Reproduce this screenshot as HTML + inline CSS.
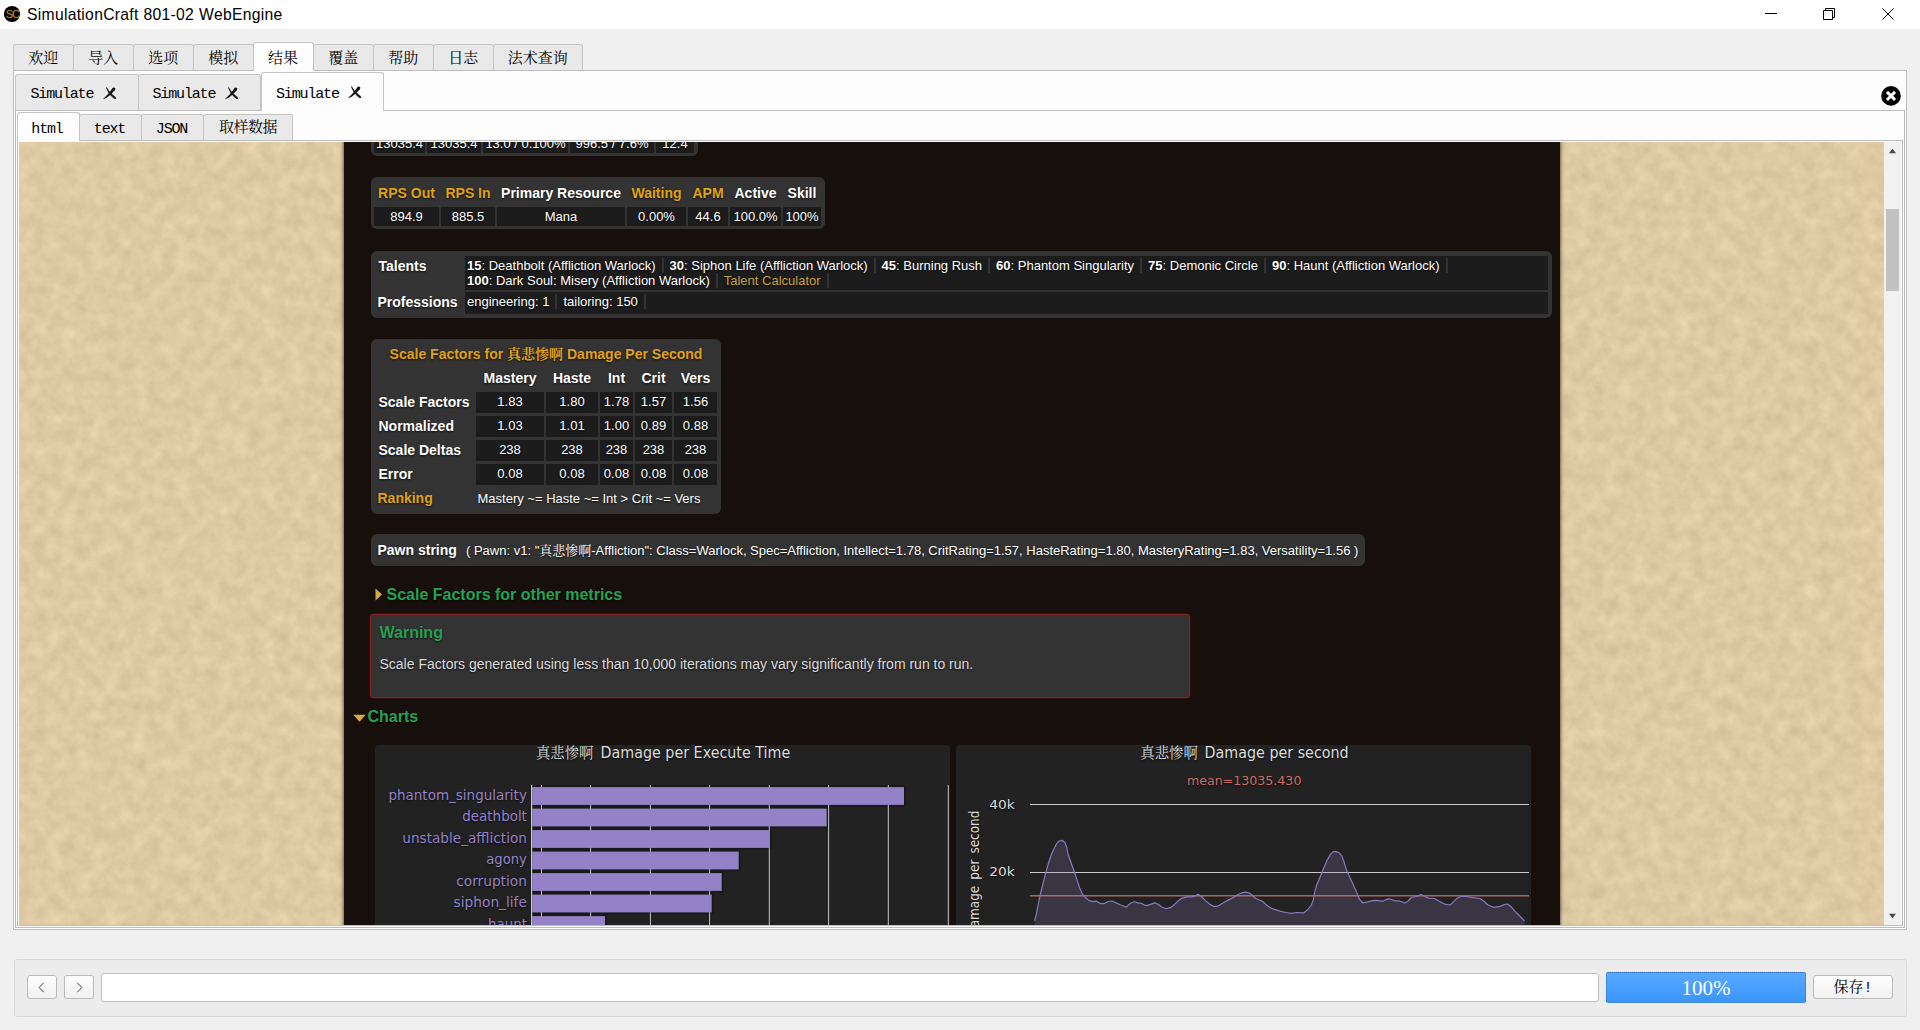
<!DOCTYPE html>
<html lang="zh">
<head>
<meta charset="utf-8">
<title>SimulationCraft 801-02 WebEngine</title>
<style>
*{margin:0;padding:0;border:none;box-sizing:content-box}
html,body{width:1920px;height:1030px;overflow:hidden;background:#f0f0f0}
body{position:relative;font-family:"Liberation Sans",sans-serif}
.abs{position:absolute}
/* ---------- window chrome ---------- */
#titlebar{position:absolute;left:0;top:0;width:1920px;height:29px;background:#fff}
#title{position:absolute;left:27px;top:5.3px;font:15.7px/20px "Liberation Sans",sans-serif;color:#000;white-space:nowrap;letter-spacing:0.29px;word-spacing:.3px}
.qt{font-family:"Liberation Mono","Noto Serif CJK SC",serif;color:#000;white-space:nowrap}
.tab{position:absolute;background:#e9e9e9;border:1px solid #c4c4c4;border-bottom:none;border-radius:3px 3px 0 0;text-align:center;box-sizing:border-box}
.tab.sel{background:#fdfdfd}
.pane{position:absolute;border:1px solid #bcbcbc;background:#fdfdfd;box-sizing:border-box}

.t1{top:44px;width:61px;height:26px;font-size:15px;line-height:30px;text-indent:-0.5px}
.t2{top:74px;width:123px;height:36px;font-size:15px;line-height:40px;letter-spacing:-1.15px;text-align:left;padding-left:13.5px}
.t2 svg{position:absolute;left:85.5px;top:11.5px}.t2.sel svg{top:13px;left:86px}.t2.first svg{left:86.5px}
.t3{top:114px;width:63px;height:26px;font-size:15px;line-height:30px;letter-spacing:-1.15px;text-indent:-2px}
.btn{position:absolute;box-sizing:border-box;border:1px solid #b9b9b9;border-radius:3px;background:linear-gradient(#fefefe,#f1f1f1)}
#prog{border:1px dotted #2f6fc0;border-radius:2px;background:linear-gradient(#58a8ff,#3a96fd);color:#fff;text-align:center;font-size:21px;line-height:31px;font-family:"Liberation Serif","Noto Serif CJK SC",serif}
/* ---------- web view ---------- */
#web .in{position:absolute;left:-19px;top:-142px;width:1920px;height:1030px;font-size:13px;color:#fff;font-family:"Liberation Sans","Noto Serif CJK SC",sans-serif;text-shadow:0 1px 2px rgba(0,0,0,.75)}
#sec{position:absolute;left:344px;top:100px;width:1216px;height:900px;background:#160f0b;box-shadow:0 0 4px rgba(0,0,0,.8)}
.box{position:absolute;background:#333;border-radius:6px}
.c{position:absolute;background:#1c1c1c;text-align:center;font-size:13px;line-height:19px;height:19px;white-space:nowrap;color:#fff}
.h{position:absolute;text-align:center;font-weight:bold;font-size:14px;line-height:19px;white-space:nowrap;color:#fff}
.g{color:#e0a215}
.l{text-align:left}
h3{position:absolute;font:bold 16px/20px "Liberation Sans",sans-serif;color:#27a052;white-space:nowrap}
ul.fl{list-style:none;position:absolute}
ul.fl li{float:left;padding-right:6px;margin-right:6px;border-right:2px solid #333;line-height:15px;height:15px;white-space:nowrap}
ul.fl a{color:#c7a23c}

#web{position:absolute;left:19px;top:142px;width:1865px;height:783px;overflow:hidden;background:#dcc9a1}
#sb{position:absolute;left:1884px;top:142px;width:17px;height:783px;background:#f1f1f1}
</style>
</head>
<body>
<div id="titlebar">
  <svg class="abs" style="left:3px;top:4.8px" width="18" height="18" viewBox="0 0 18 18"><circle cx="9" cy="9" r="8.1" fill="#050403"/><text x="9.2" y="12.9" font-family="Liberation Sans, sans-serif" font-size="11" letter-spacing="-1.2" fill="#c8921e" text-anchor="middle">SC</text></svg>
  <div id="title">SimulationCraft 801-02 WebEngine</div>
  <svg class="abs" style="left:1760px;top:4px" width="150" height="22" viewBox="0 0 150 22" fill="none" stroke="#000" stroke-width="1">
    <path d="M5 9.5H17"/>
    <path d="M63.5 6.5h9v9h-9zM65.5 6.5v-2h9v9h-2"/>
    <path d="M122.5 4.5l11 11M133.5 4.5l-11 11"/>
  </svg>
</div>

<!-- main tab pane -->
<div class="pane" style="left:13px;top:70px;width:1894px;height:860px"></div>

<!-- top-level tabs -->
<div id="toptabs">
  <div class="tab qt t1" style="left:13px">欢迎</div>
  <div class="tab qt t1" style="left:73px">导入</div>
  <div class="tab qt t1" style="left:133px">选项</div>
  <div class="tab qt t1" style="left:193px">模拟</div>
  <div class="tab qt t1" style="left:313px">覆盖</div>
  <div class="tab qt t1" style="left:373px">帮助</div>
  <div class="tab qt t1" style="left:433px">日志</div>
  <div class="tab qt t1" style="left:493px;width:90px">法术查询</div>
  <div class="tab qt t1 sel" style="left:253px;top:42px;width:61px;height:29px;line-height:33px;text-indent:-1px">结果</div>
</div>
<!-- second-level pane + tabs -->
<div class="pane" style="left:15px;top:110px;width:1890px;height:818px"></div>
<div class="tab qt t2 first" style="left:15px;width:124px;padding-left:14.5px">Simulate<svg width="14.5" height="13.5" viewBox="0 0 14 13"><path d="M9.6 .4L11.9 1 11.6 2.8 7.5 7.2 3.5 10.3 .2 11.9 .5 11.2 4 7.8 6.5 4.8Z" fill="#111"/><path d="M3 .2L3.8 .4 6.5 4.5 9.5 7.5 12.3 9.8 12.8 11.5 11 11.6 8 9 5.2 5.5 3.2 1.5Z" fill="#1a1a1a"/></svg></div>
<div class="tab qt t2" style="left:138px">Simulate<svg width="14.5" height="13.5" viewBox="0 0 14 13"><path d="M9.6 .4L11.9 1 11.6 2.8 7.5 7.2 3.5 10.3 .2 11.9 .5 11.2 4 7.8 6.5 4.8Z" fill="#111"/><path d="M3 .2L3.8 .4 6.5 4.5 9.5 7.5 12.3 9.8 12.8 11.5 11 11.6 8 9 5.2 5.5 3.2 1.5Z" fill="#1a1a1a"/></svg></div>
<div class="tab qt t2 sel" style="left:261px;top:72px;height:39px;line-height:43px;padding-left:14px">Simulate<svg width="14.5" height="13.5" viewBox="0 0 14 13"><path d="M9.6 .4L11.9 1 11.6 2.8 7.5 7.2 3.5 10.3 .2 11.9 .5 11.2 4 7.8 6.5 4.8Z" fill="#111"/><path d="M3 .2L3.8 .4 6.5 4.5 9.5 7.5 12.3 9.8 12.8 11.5 11 11.6 8 9 5.2 5.5 3.2 1.5Z" fill="#1a1a1a"/></svg></div>
<svg class="abs" style="left:1880px;top:85px" width="22" height="22" viewBox="0 0 22 22"><circle cx="11" cy="10.9" r="9.8" fill="#000"/><path d="M8 7.9l6 6M14 7.9l-6 6" stroke="#fff" stroke-width="2.9" stroke-linecap="square"/></svg>
<!-- third-level pane + tabs -->
<div class="pane" style="left:17px;top:140px;width:1886px;height:786px"></div>
<div class="tab qt t3 sel" style="left:17px;top:112px;width:63px;height:29px;line-height:33.5px;text-indent:-3px">html</div>
<div class="tab qt t3" style="left:79px">text</div>
<div class="tab qt t3" style="left:141px">JSON</div>
<div class="tab qt t3" style="left:203px;width:90px;letter-spacing:-0.5px;text-indent:0;line-height:27px">取样数据</div>

<div id="web">
<svg class="abs" style="left:0;top:0" width="1865" height="783"><filter id="pf" x="0" y="0" width="100%" height="100%" color-interpolation-filters="sRGB"><feTurbulence type="fractalNoise" baseFrequency="0.07" numOctaves="4" seed="7"/><feColorMatrix type="matrix" values="0.12 0 0 0 0.81  0.12 0 0 0 0.735  0.11 0 0 0 0.585  0 0 0 0 1"/></filter><rect width="1865" height="783" filter="url(#pf)"/></svg>
<div class="in">
<div id="sec"></div>
<div class="box" style="left:371px;top:110px;width:327px;height:46.4px"></div>
<div class="c" style="left:374px;top:134px;width:51px;">13035.4</div>
<div class="c" style="left:427px;top:134px;width:54px;">13035.4</div>
<div class="c" style="left:483px;top:134px;width:85px;">13.0 / 0.100%</div>
<div class="c" style="left:570px;top:134px;width:84px;">996.5 / 7.6%</div>
<div class="c" style="left:656px;top:134px;width:38px;">12.4</div>
<div class="box" style="left:371px;top:177.4px;width:454px;height:52px"></div>
<div class="h" style="left:374px;top:184px;width:65px;"><span class="g">RPS Out</span></div>
<div class="h" style="left:441px;top:184px;width:54px;"><span class="g">RPS In</span></div>
<div class="h" style="left:497px;top:184px;width:128px;">Primary Resource</div>
<div class="h" style="left:627px;top:184px;width:59px;"><span class="g">Waiting</span></div>
<div class="h" style="left:688px;top:184px;width:40px;"><span class="g">APM</span></div>
<div class="h" style="left:730px;top:184px;width:51px;">Active</div>
<div class="h" style="left:783px;top:184px;width:38px;">Skill</div>
<div class="c" style="left:374px;top:207px;width:65px;">894.9</div>
<div class="c" style="left:441px;top:207px;width:54px;">885.5</div>
<div class="c" style="left:497px;top:207px;width:128px;">Mana</div>
<div class="c" style="left:627px;top:207px;width:59px;">0.00%</div>
<div class="c" style="left:688px;top:207px;width:40px;">44.6</div>
<div class="c" style="left:730px;top:207px;width:51px;">100.0%</div>
<div class="c" style="left:783px;top:207px;width:38px;">100%</div>
<div class="box" style="left:371px;top:250.6px;width:1181px;height:67.4px"></div>
<div class="c" style="left:465px;top:256px;width:1083px;height:34px"></div>
<div class="c" style="left:465px;top:292px;width:1083px;height:22px"></div>
<div class="h l" style="left:378.5px;top:257px">Talents</div>
<div class="h l" style="left:377.5px;top:292.5px">Professions</div>
<ul class="fl" style="left:467px;top:258px;width:1080px"><li><b>15</b>: Deathbolt (Affliction Warlock)</li><li><b>30</b>: Siphon Life (Affliction Warlock)</li><li><b>45</b>: Burning Rush</li><li><b>60</b>: Phantom Singularity</li><li><b>75</b>: Demonic Circle</li><li><b>90</b>: Haunt (Affliction Warlock)</li><li><b>100</b>: Dark Soul: Misery (Affliction Warlock)</li><li><a>Talent Calculator</a></li></ul>
<ul class="fl" style="left:467px;top:294px;width:1080px"><li>engineering: 1</li><li>tailoring: 150</li></ul>
<div class="box" style="left:371px;top:338.6px;width:350px;height:175.4px"></div>
<div class="h g" style="left:371px;top:344.5px;width:350px">Scale Factors for 真悲惨啊 Damage Per Second</div>
<div class="h" style="left:476px;top:368.5px;width:68px;">Mastery</div>
<div class="h" style="left:546px;top:368.5px;width:52px;">Haste</div>
<div class="h" style="left:600px;top:368.5px;width:33px;">Int</div>
<div class="h" style="left:635px;top:368.5px;width:37px;">Crit</div>
<div class="h" style="left:674px;top:368.5px;width:43px;">Vers</div>
<div class="h l" style="left:378.5px;top:392.0px;line-height:21px">Scale Factors</div>
<div class="c" style="left:476px;top:392.0px;width:68px;height:21px;line-height:19px;">1.83</div>
<div class="c" style="left:546px;top:392.0px;width:52px;height:21px;line-height:19px;">1.80</div>
<div class="c" style="left:600px;top:392.0px;width:33px;height:21px;line-height:19px;">1.78</div>
<div class="c" style="left:635px;top:392.0px;width:37px;height:21px;line-height:19px;">1.57</div>
<div class="c" style="left:674px;top:392.0px;width:43px;height:21px;line-height:19px;">1.56</div>
<div class="h l" style="left:378.5px;top:416.0px;line-height:21px">Normalized</div>
<div class="c" style="left:476px;top:416.0px;width:68px;height:21px;line-height:19px;">1.03</div>
<div class="c" style="left:546px;top:416.0px;width:52px;height:21px;line-height:19px;">1.01</div>
<div class="c" style="left:600px;top:416.0px;width:33px;height:21px;line-height:19px;">1.00</div>
<div class="c" style="left:635px;top:416.0px;width:37px;height:21px;line-height:19px;">0.89</div>
<div class="c" style="left:674px;top:416.0px;width:43px;height:21px;line-height:19px;">0.88</div>
<div class="h l" style="left:378.5px;top:440.0px;line-height:21px">Scale Deltas</div>
<div class="c" style="left:476px;top:440.0px;width:68px;height:21px;line-height:19px;">238</div>
<div class="c" style="left:546px;top:440.0px;width:52px;height:21px;line-height:19px;">238</div>
<div class="c" style="left:600px;top:440.0px;width:33px;height:21px;line-height:19px;">238</div>
<div class="c" style="left:635px;top:440.0px;width:37px;height:21px;line-height:19px;">238</div>
<div class="c" style="left:674px;top:440.0px;width:43px;height:21px;line-height:19px;">238</div>
<div class="h l" style="left:378.5px;top:464.0px;line-height:21px">Error</div>
<div class="c" style="left:476px;top:464.0px;width:68px;height:21px;line-height:19px;">0.08</div>
<div class="c" style="left:546px;top:464.0px;width:52px;height:21px;line-height:19px;">0.08</div>
<div class="c" style="left:600px;top:464.0px;width:33px;height:21px;line-height:19px;">0.08</div>
<div class="c" style="left:635px;top:464.0px;width:37px;height:21px;line-height:19px;">0.08</div>
<div class="c" style="left:674px;top:464.0px;width:43px;height:21px;line-height:19px;">0.08</div>
<div class="h l g" style="left:377.5px;top:488px;line-height:21px">Ranking</div>
<div class="h l" style="left:477.5px;top:488px;line-height:21px;font-weight:normal;font-size:13px">Mastery ~= Haste ~= Int &gt; Crit ~= Vers</div>
<div class="box" style="left:371px;top:534px;width:994px;height:32px"></div>
<div class="h l" style="left:377.5px;top:541px">Pawn string</div>
<div class="h l" style="left:466px;top:541px;font-weight:normal;font-size:13px">( Pawn: v1: "真悲惨啊-Affliction": Class=Warlock, Spec=Affliction, Intellect=1.78, CritRating=1.57, HasteRating=1.80, MasteryRating=1.83, Versatility=1.56 )</div>
<svg class="abs" style="left:375px;top:588px" width="8" height="14"><path d="M0.5 0.5v12l6.5-6z" fill="#d7a940"/></svg>
<h3 style="left:386.5px;top:585px">Scale Factors for other metrics</h3>
<div class="abs" style="left:370px;top:614px;width:820px;height:84px;box-sizing:border-box;border:1px solid #8a2424;border-radius:4px;background:#333;box-shadow:0 0 2px #a11d1d"></div>
<h3 style="left:379.5px;top:622.5px">Warning</h3>
<div class="abs" style="left:379.5px;top:655px;font-size:14px;line-height:18px;color:#dcdcdc;white-space:nowrap">Scale Factors generated using less than 10,000 iterations may vary significantly from run to run.</div>
<svg class="abs" style="left:353px;top:714px" width="14" height="9"><path d="M0.3 0.8h12.4l-6.2 7z" fill="#d7a940"/></svg>
<h3 style="left:367.5px;top:707px">Charts</h3>
<svg class="abs" style="left:0;top:0;overflow:visible" width="1920" height="1030" font-family="DejaVu Sans, Noto Serif CJK SC, sans-serif">
<rect x="375" y="745" width="575" height="220" rx="4" fill="#222"/>
<rect x="956" y="745" width="575" height="220" rx="4" fill="#222"/>
<text y="758" font-size="15" fill="#dcdcdc"><tspan x="536" font-family="Liberation Serif, Noto Serif CJK SC, serif" font-size="14.5" textLength="57.5" lengthAdjust="spacingAndGlyphs">真悲惨啊</tspan><tspan x="600.6" textLength="189.6" lengthAdjust="spacingAndGlyphs">Damage per Execute Time</tspan></text>
<rect x="530" y="785.1" width="376.0" height="21.8" fill="#191919"/>
<rect x="530" y="806.6" width="298.7" height="21.8" fill="#191919"/>
<rect x="530" y="828.1" width="242.0" height="21.8" fill="#191919"/>
<rect x="530" y="849.6" width="210.7" height="21.8" fill="#191919"/>
<rect x="530" y="871.1" width="193.7" height="21.8" fill="#191919"/>
<rect x="530" y="892.6" width="183.7" height="21.8" fill="#191919"/>
<rect x="530" y="914.1" width="77.0" height="21.8" fill="#191919"/>
<rect x="541.0" y="785" width="1" height="200" fill="#c4c4c4"/>
<rect x="590.1" y="785" width="1" height="200" fill="#c4c4c4"/>
<rect x="649.9" y="785" width="1" height="200" fill="#c4c4c4"/>
<rect x="709.1" y="785" width="1" height="200" fill="#c4c4c4"/>
<rect x="768.8" y="785" width="1" height="200" fill="#c4c4c4"/>
<rect x="828.1" y="785" width="1" height="200" fill="#c4c4c4"/>
<rect x="887.8" y="785" width="1" height="200" fill="#c4c4c4"/>
<rect x="947.8" y="785" width="1" height="200" fill="#c4c4c4"/>
<rect x="531" y="785" width="1.2" height="200" fill="#d0d0d0"/>
<rect x="532.2" y="787.1" width="371.8" height="17.8" fill="#9482c9"/>
<rect x="532.2" y="808.6" width="294.5" height="17.8" fill="#9482c9"/>
<rect x="532.2" y="830.1" width="237.8" height="17.8" fill="#9482c9"/>
<rect x="532.2" y="851.6" width="206.5" height="17.8" fill="#9482c9"/>
<rect x="532.2" y="873.1" width="189.5" height="17.8" fill="#9482c9"/>
<rect x="532.2" y="894.6" width="179.5" height="17.8" fill="#9482c9"/>
<rect x="532.2" y="916.1" width="72.8" height="17.8" fill="#9482c9"/>
<text x="388.4" y="799.8" font-size="13.5" fill="#9482c9" textLength="138.5" lengthAdjust="spacingAndGlyphs">phantom_singularity</text>
<text x="462.3" y="821.3" font-size="13.5" fill="#9482c9" textLength="64.6" lengthAdjust="spacingAndGlyphs">deathbolt</text>
<text x="402.3" y="842.8" font-size="13.5" fill="#9482c9" textLength="124.6" lengthAdjust="spacingAndGlyphs">unstable_affliction</text>
<text x="486.2" y="864.3" font-size="13.5" fill="#9482c9" textLength="40.7" lengthAdjust="spacingAndGlyphs">agony</text>
<text x="456.2" y="885.8" font-size="13.5" fill="#9482c9" textLength="70.7" lengthAdjust="spacingAndGlyphs">corruption</text>
<text x="453.6" y="907.3" font-size="13.5" fill="#9482c9" textLength="73.3" lengthAdjust="spacingAndGlyphs">siphon_life</text>
<text x="488" y="928.8" font-size="13.5" fill="#9482c9" textLength="38.9" lengthAdjust="spacingAndGlyphs">haunt</text>
<text y="757.8" font-size="15" fill="#dcdcdc"><tspan x="1140.3" font-family="Liberation Serif, Noto Serif CJK SC, serif" font-size="14.5" textLength="57.5" lengthAdjust="spacingAndGlyphs">真悲惨啊</tspan><tspan x="1204.6" textLength="144" lengthAdjust="spacingAndGlyphs">Damage per second</tspan></text>
<text x="1187" y="784.7" font-size="12" fill="#cf6d63" textLength="114.4" lengthAdjust="spacingAndGlyphs">mean=13035.430</text>
<text x="989.3" y="809.1" font-size="13" fill="#dcdcdc" textLength="25.5" lengthAdjust="spacingAndGlyphs">40k</text>
<text x="989.3" y="876.1" font-size="13" fill="#dcdcdc" textLength="25.5" lengthAdjust="spacingAndGlyphs">20k</text>
<text transform="translate(978.7,810.6) rotate(-90)" x="0" y="0" text-anchor="end" font-size="14" fill="#dcdcdc" textLength="126" word-spacing="2.6" lengthAdjust="spacingAndGlyphs">Damage per second</text>
<rect x="1030" y="804" width="499" height="1" fill="#c8c8c8"/>
<rect x="1030" y="872" width="499" height="1" fill="#c8c8c8"/>
<path d="M1034.6 940 L1034.6 920.9 L1036.2 914.8 L1038.3 904.0 L1040.3 894.5 L1043.0 883.6 L1045.7 872.8 L1048.4 863.3 L1051.1 855.2 L1053.9 849.1 L1056.6 843.7 L1059.3 841.0 L1062.0 840.3 L1064.7 842.3 L1066.7 847.1 L1068.1 854.5 L1070.8 862.0 L1074.2 871.5 L1076.9 879.6 L1079.6 887.7 L1082.3 893.8 L1085.0 897.2 L1089.1 900.6 L1093.1 901.7 L1096.5 901.2 L1100.6 903.7 L1104.0 903.7 L1108.0 901.5 L1112.1 901.0 L1116.1 902.9 L1120.2 904.8 L1123.6 906.0 L1126.3 907.1 L1130.4 903.3 L1134.4 901.7 L1137.8 902.9 L1141.2 903.3 L1145.3 905.6 L1150.0 904.6 L1154.7 902.9 L1158.1 904.2 L1162.2 907.3 L1166.2 908.7 L1170.3 907.7 L1173.7 905.3 L1177.8 901.2 L1181.8 898.3 L1186.6 896.9 L1192.0 896.9 L1196.0 895.6 L1198.1 894.2 L1201.4 896.5 L1205.5 900.6 L1209.6 904.0 L1213.6 906.4 L1217.0 906.4 L1221.8 903.7 L1227.2 900.6 L1232.6 897.9 L1238.0 894.5 L1242.1 892.7 L1246.1 892.2 L1250.2 893.4 L1255.6 898.5 L1262.4 901.2 L1267.8 906.0 L1271.9 908.7 L1275.4 909.6 L1280.8 911.4 L1286.2 912.5 L1291.7 913.4 L1297.1 912.5 L1303.9 912.8 L1307.9 909.4 L1311.3 905.3 L1313.3 899.9 L1314.7 891.8 L1316.7 885.0 L1320.1 876.9 L1323.5 868.7 L1326.9 860.6 L1330.3 854.5 L1333.0 851.8 L1335.7 851.4 L1339.1 852.8 L1341.8 855.9 L1343.8 861.3 L1346.5 870.1 L1349.9 877.5 L1353.3 885.0 L1356.7 892.4 L1359.4 899.2 L1362.8 903.0 L1367.5 901.9 L1374.3 900.3 L1378.3 900.6 L1382.4 901.2 L1387.8 898.9 L1390.5 899.2 L1394.6 900.6 L1400.0 901.2 L1404.7 902.9 L1408.1 901.0 L1411.5 897.5 L1416.2 896.5 L1421.0 894.5 L1424.4 896.1 L1428.4 898.1 L1434.5 898.5 L1439.3 901.2 L1444.7 904.2 L1450.1 905.0 L1453.5 901.9 L1456.9 898.3 L1460.9 896.5 L1466.3 896.5 L1473.1 897.6 L1479.9 898.5 L1484.0 901.2 L1488.0 905.0 L1493.4 907.3 L1498.8 906.7 L1504.3 904.6 L1507.6 904.0 L1511.0 906.7 L1516.4 912.8 L1521.9 918.2 L1524.6 920.9 L1524.6 940Z" fill="#9482c9" fill-opacity="0.2"/>
<rect x="1030" y="895.2" width="499" height="1.2" fill="#c97b72"/>
<path d="M1034.6 920.9 L1036.2 914.8 L1038.3 904.0 L1040.3 894.5 L1043.0 883.6 L1045.7 872.8 L1048.4 863.3 L1051.1 855.2 L1053.9 849.1 L1056.6 843.7 L1059.3 841.0 L1062.0 840.3 L1064.7 842.3 L1066.7 847.1 L1068.1 854.5 L1070.8 862.0 L1074.2 871.5 L1076.9 879.6 L1079.6 887.7 L1082.3 893.8 L1085.0 897.2 L1089.1 900.6 L1093.1 901.7 L1096.5 901.2 L1100.6 903.7 L1104.0 903.7 L1108.0 901.5 L1112.1 901.0 L1116.1 902.9 L1120.2 904.8 L1123.6 906.0 L1126.3 907.1 L1130.4 903.3 L1134.4 901.7 L1137.8 902.9 L1141.2 903.3 L1145.3 905.6 L1150.0 904.6 L1154.7 902.9 L1158.1 904.2 L1162.2 907.3 L1166.2 908.7 L1170.3 907.7 L1173.7 905.3 L1177.8 901.2 L1181.8 898.3 L1186.6 896.9 L1192.0 896.9 L1196.0 895.6 L1198.1 894.2 L1201.4 896.5 L1205.5 900.6 L1209.6 904.0 L1213.6 906.4 L1217.0 906.4 L1221.8 903.7 L1227.2 900.6 L1232.6 897.9 L1238.0 894.5 L1242.1 892.7 L1246.1 892.2 L1250.2 893.4 L1255.6 898.5 L1262.4 901.2 L1267.8 906.0 L1271.9 908.7 L1275.4 909.6 L1280.8 911.4 L1286.2 912.5 L1291.7 913.4 L1297.1 912.5 L1303.9 912.8 L1307.9 909.4 L1311.3 905.3 L1313.3 899.9 L1314.7 891.8 L1316.7 885.0 L1320.1 876.9 L1323.5 868.7 L1326.9 860.6 L1330.3 854.5 L1333.0 851.8 L1335.7 851.4 L1339.1 852.8 L1341.8 855.9 L1343.8 861.3 L1346.5 870.1 L1349.9 877.5 L1353.3 885.0 L1356.7 892.4 L1359.4 899.2 L1362.8 903.0 L1367.5 901.9 L1374.3 900.3 L1378.3 900.6 L1382.4 901.2 L1387.8 898.9 L1390.5 899.2 L1394.6 900.6 L1400.0 901.2 L1404.7 902.9 L1408.1 901.0 L1411.5 897.5 L1416.2 896.5 L1421.0 894.5 L1424.4 896.1 L1428.4 898.1 L1434.5 898.5 L1439.3 901.2 L1444.7 904.2 L1450.1 905.0 L1453.5 901.9 L1456.9 898.3 L1460.9 896.5 L1466.3 896.5 L1473.1 897.6 L1479.9 898.5 L1484.0 901.2 L1488.0 905.0 L1493.4 907.3 L1498.8 906.7 L1504.3 904.6 L1507.6 904.0 L1511.0 906.7 L1516.4 912.8 L1521.9 918.2 L1524.6 920.9" fill="none" stroke="#8a79bd" stroke-width="1.2" stroke-linejoin="round"/>
</svg>
</div>
</div>
<div id="sb"><svg width="17" height="783" viewBox="0 0 17 783"><path d="M5 11.2L8.5 6.8 12 11.2Z" fill="#484848"/><rect x="2" y="67" width="13" height="82" fill="#c1c1c1"/><path d="M5 771.8L8.5 776.2 12 771.8Z" fill="#484848"/></svg></div>
<!-- bottom bar -->
<div class="abs" style="left:14px;top:959px;width:1893px;height:58px;box-sizing:border-box;border:1px solid #d9d9d9;border-radius:3px;background:#ececec"></div>
<div class="btn" style="left:27px;top:975px;width:30px;height:24px"><svg width="28" height="22" viewBox="0 0 28 22"><path d="M15.7 6.8l-4.6 4.7 4.6 4.7" fill="none" stroke="#444" stroke-width="1"/></svg></div>
<div class="btn" style="left:64px;top:975px;width:30px;height:24px"><svg width="28" height="22" viewBox="0 0 28 22"><path d="M12.3 6.8l4.6 4.7-4.6 4.7" fill="none" stroke="#444" stroke-width="1"/></svg></div>
<div class="abs" style="left:101px;top:973px;width:1498px;height:29px;box-sizing:border-box;border:1px solid #bdbdbd;border-radius:3px;background:#fff"></div>
<div class="abs qt" id="prog" style="left:1606px;top:972px;width:200px;height:31px;box-sizing:border-box">100%</div>
<div class="btn qt" style="left:1813px;top:975px;width:80px;height:24px;font-size:15px;line-height:26px;text-align:center">保存!</div>

</body>
</html>
